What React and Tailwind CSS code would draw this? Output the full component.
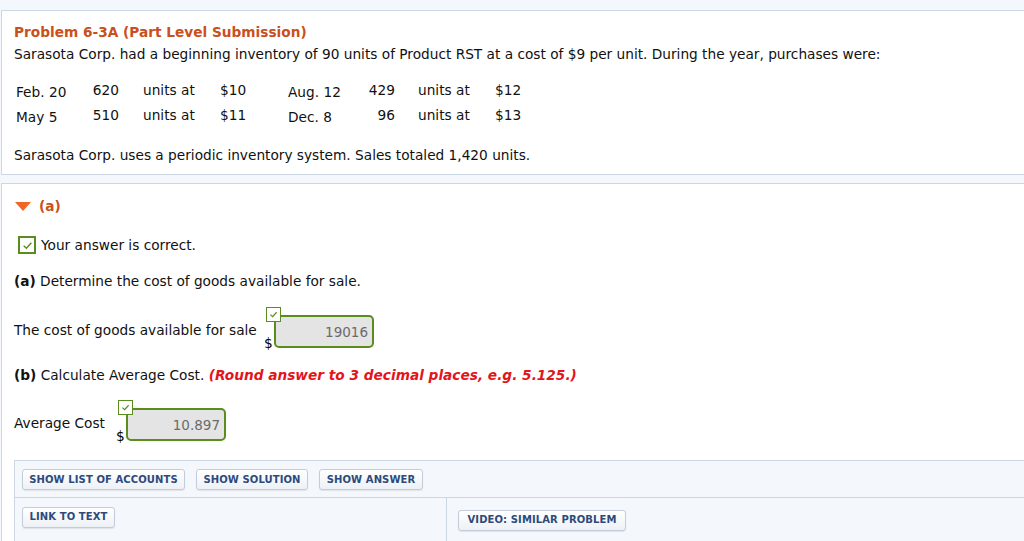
import React from 'react';

const font = "font-['DejaVu_Sans','Verdana',sans-serif]";

const SmallCheck = ({ className = '' }) => (
  <div className={`w-[15px] h-[15px] bg-white border border-[#5b8c1e] flex items-center justify-center ${className}`}>
    <svg width="9" height="9" viewBox="0 0 10 10">
      <path d="M1.5 5.2 L4 7.5 L8.5 2.5" fill="none" stroke="#5b8c1e" strokeWidth="1.3" />
    </svg>
  </div>
);

// Answer field: "$" on the left, green input, tick box over the corner
const AnswerField = ({ value }) => (
  <div className="relative pt-[8px] pl-[10px]">
    <SmallCheck className="absolute top-0 left-[2px] z-10" />
    <span className="absolute left-0 bottom-[-4px] text-[13.7px] leading-[18px] text-black">$</span>
    <div className="w-[100px] h-[33px] bg-[#e4e4e4] border-2 border-[#5b8c1e] rounded-[5px] flex items-center justify-end pr-[4px] pt-[2px] text-[13.5px] text-[#6b6b6b]">
      {value}
    </div>
  </div>
);

const Btn = ({ children, className = '' }) => (
  <button className={`h-[21px] px-[6px] rounded-[3px] border border-[#c3ccd8] bg-gradient-to-b from-white to-[#edf1f6] shadow-[0_1px_1px_rgba(0,0,0,0.08)] text-[10px] font-bold leading-none text-[#2d4a7a] tracking-[0.1px] ${className}`}>
    {children}
  </button>
);

const purchases = [
  ['Feb. 20', '620', '$10', 'Aug. 12', '429', '$12'],
  ['May 5', '510', '$11', 'Dec. 8', '96', '$13'],
];

export default function App() {
  return (
    <div className={`${font} min-h-[541px] w-[1024px] overflow-hidden bg-[#f4f7fb] pt-[10px] pl-px text-[13.7px] text-[#111]`}>
      {/* Problem statement */}
      <div className="bg-white border-y border-l border-[#cdd6e3] pl-[12px] pt-[12px] pb-[10px]">
        <h1 className="text-[13.7px] leading-[18px] font-bold text-[#c9501c]">Problem 6-3A (Part Level Submission)</h1>
        <p className="mt-[4px] leading-[18px]">
          Sarasota Corp. had a beginning inventory of 90 units of Product RST at a cost of $9 per unit. During the year, purchases were:
        </p>
        <div className="mt-[18px] pl-[2px]">
          {purchases.map(r => (
            <div key={r[0]} className="flex items-start h-[25px] leading-[18px]">
              <span className="w-[72px] mt-[2px]">{r[0]}</span>
              <span className="w-[31px] text-right">{r[1]}</span>
              <span className="w-[24px]" />
              <span className="w-[77px]">units at</span>
              <span className="w-[68px]">{r[2]}</span>
              <span className="w-[57px] mt-[2px]">{r[3]}</span>
              <span className="w-[50px] text-right">{r[4]}</span>
              <span className="w-[23px]" />
              <span className="w-[77px]">units at</span>
              <span>{r[5]}</span>
            </div>
          ))}
        </div>
        <p className="mt-[15px] leading-[18px]">Sarasota Corp. uses a periodic inventory system. Sales totaled 1,420 units.</p>
      </div>

      {/* Part (a) */}
      <div className="mt-[8px] bg-white border-t border-l border-[#cdd6e3] pl-[12px] pt-[13px]">
        <div className="flex items-center h-[18px]">
          <svg width="16" height="9" viewBox="0 0 16 9" className="ml-[1px]">
            <path d="M0 0 H16 L8 9 Z" fill="#f26522" />
          </svg>
          <span className="ml-[8px] font-bold text-[#c9501c]">(a)</span>
        </div>

        <div className="mt-[21px] flex items-center ml-[4px]">
          <div className="w-[18px] h-[18px] border-2 border-[#5b8c1e] bg-white flex items-center justify-center">
            <svg width="11" height="11" viewBox="0 0 10 10">
              <path d="M1.5 5.2 L4 7.5 L8.5 2.5" fill="none" stroke="#5b8c1e" strokeWidth="1.3" />
            </svg>
          </div>
          <span className="ml-[5px] leading-[18px]">Your answer is correct.</span>
        </div>

        <p className="mt-[18px] leading-[18px]"><b>(a)</b> Determine the cost of goods available for sale.</p>

        <div className="mt-[17px] flex items-start">
          <span className="mt-[14px] leading-[18px] w-[250px]">The cost of goods available for sale</span>
          <AnswerField value="19016" />
        </div>

        <p className="mt-[18px] leading-[18px]">
          <b>(b)</b> Calculate Average Cost. <span className="italic font-bold text-[#e3151b]">(Round answer to 3 decimal places, e.g. 5.125.)</span>
        </p>

        <div className="mt-[16px] flex items-start">
          <span className="mt-[14px] leading-[18px] w-[102px]">Average Cost</span>
          <AnswerField value="10.897" />
        </div>

        {/* Tool buttons */}
        <div className="mt-[19px] bg-[#f4f7fb] border-t border-l border-[#cdd6e3]">
          <div className="flex gap-[11px] pl-[7px] pt-[8px] pb-[7px] border-b border-[#cdd6e3]">
            <Btn className="w-[163px]">SHOW LIST OF ACCOUNTS</Btn>
            <Btn className="w-[112px]">SHOW SOLUTION</Btn>
            <Btn className="w-[104px]">SHOW ANSWER</Btn>
          </div>
          <div className="flex h-[50px]">
            <div className="w-[432px] border-r border-[#cdd6e3] pl-[7px] pt-[7px]">
              <Btn className="w-[93px]">LINK TO TEXT</Btn>
            </div>
            <div className="pl-[11px] pt-[10px]">
              <Btn className="w-[168px]">VIDEO: SIMILAR PROBLEM</Btn>
            </div>
          </div>
        </div>
      </div>
    </div>
  );
}
